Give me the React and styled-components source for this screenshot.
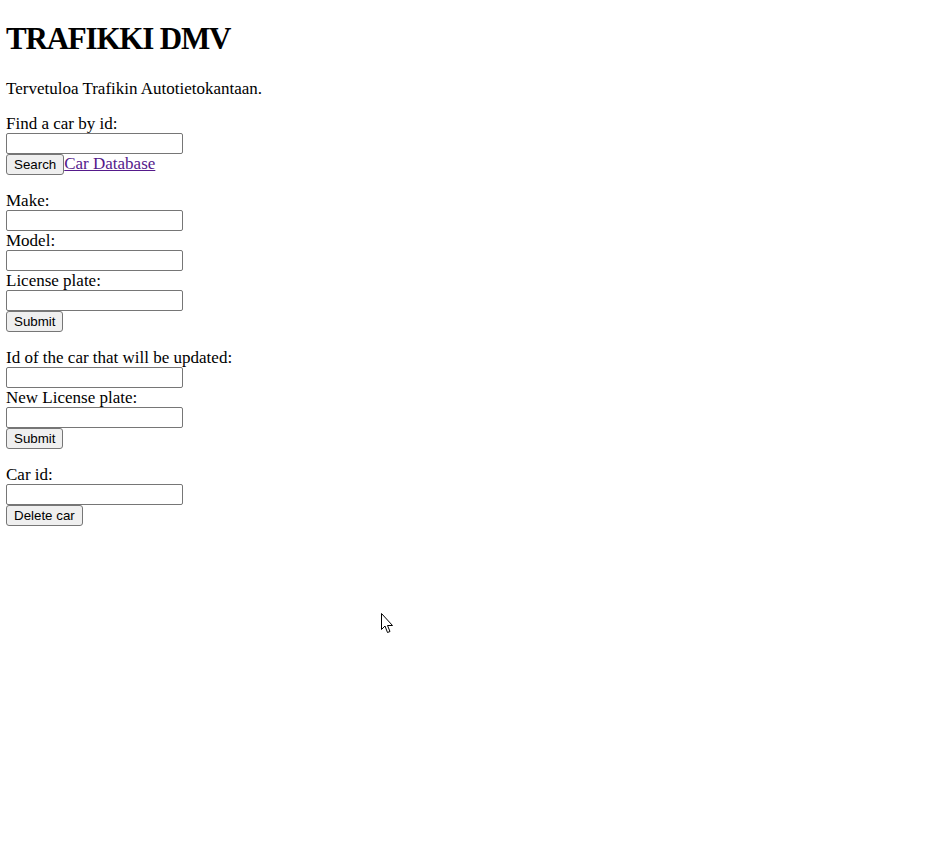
import React from "react";
import styled, { createGlobalStyle } from "styled-components";

const Global = createGlobalStyle`
  html, body { margin: 0; padding: 0; background: #ffffff; }
  body {
    padding: 0 6px;
    font-family: "Liberation Serif", "Times New Roman", serif;
    font-size: 17px;
    line-height: 19px;
    color: #000000;
  }
`;

const Page = styled.div`
  position: relative;
  min-height: 860px;
  display: flex;
  flex-direction: column;
  align-items: flex-start;
`;

const Title = styled.h1`
  margin: 20px 0 22px;
  font-family: "Liberation Serif", serif;
  font-size: 31px;
  line-height: 37px;
  font-weight: 700;
  letter-spacing: -1.2px;
`;

const Intro = styled.p`
  margin: 0 0 16px;
`;

const Form = styled.form`
  display: flex;
  flex-direction: column;
  align-items: flex-start;
  margin: 0 0 16px;
`;

const Label = styled.label`
  display: block;
  height: 19px;
`;

const Input = styled.input`
  box-sizing: border-box;
  width: 177px;
  height: 21px;
  margin: 0;
  padding: 1px 2px;
  border: 1px solid #767676;
  border-radius: 2px;
  background: #ffffff;
  font-family: "Liberation Sans", Arial, sans-serif;
  font-size: 13.333px;
`;

const Row = styled.div`
  display: flex;
  align-items: baseline;
`;

const Button = styled.button`
  box-sizing: border-box;
  height: 21px;
  margin: 0;
  padding: 1px 7px;
  border: 1px solid #767676;
  border-radius: 3px;
  background: #efefef;
  color: #000000;
  font-family: "Liberation Sans", Arial, sans-serif;
  font-size: 13.333px;
  line-height: 17px;
`;

const Link = styled.a`
  color: #551a8b;
  text-decoration: underline;
`;

const Cursor = styled.svg`
  position: absolute;
  left: 375px;
  top: 613px;
`;

export default function App() {
  return (
    <Page>
      <Global />
      <Title>TRAFIKKI DMV</Title>
      <Intro>Tervetuloa Trafikin Autotietokantaan.</Intro>

      <Form onSubmit={(e) => e.preventDefault()}>
        <Label htmlFor="findId">Find a car by id:</Label>
        <Input id="findId" type="text" />
        <Row>
          <Button type="submit">Search</Button>
          <Link href="#">Car Database</Link>
        </Row>
      </Form>

      <Form onSubmit={(e) => e.preventDefault()}>
        <Label htmlFor="make">Make:</Label>
        <Input id="make" type="text" />
        <Label htmlFor="model">Model:</Label>
        <Input id="model" type="text" />
        <Label htmlFor="plate">License plate:</Label>
        <Input id="plate" type="text" />
        <Button type="submit">Submit</Button>
      </Form>

      <Form onSubmit={(e) => e.preventDefault()}>
        <Label htmlFor="updId">Id of the car that will be updated:</Label>
        <Input id="updId" type="text" />
        <Label htmlFor="newPlate">New License plate:</Label>
        <Input id="newPlate" type="text" />
        <Button type="submit">Submit</Button>
      </Form>

      <Form onSubmit={(e) => e.preventDefault()}>
        <Label htmlFor="delId">Car id:</Label>
        <Input id="delId" type="text" />
        <Button type="submit">Delete car</Button>
      </Form>

      <Cursor width="14" height="21" viewBox="0 0 14 21">
        <path
          d="M6.5 0.5 L6.5 16.5 L10 13 L12.5 19.5 L15 18.5 L12.5 12.5 L17.5 12.5 Z"
          transform="translate(-6 0)"
          fill="#ffffff"
          stroke="#000000"
          strokeWidth="1"
          strokeLinejoin="miter"
        />
      </Cursor>
    </Page>
  );
}
